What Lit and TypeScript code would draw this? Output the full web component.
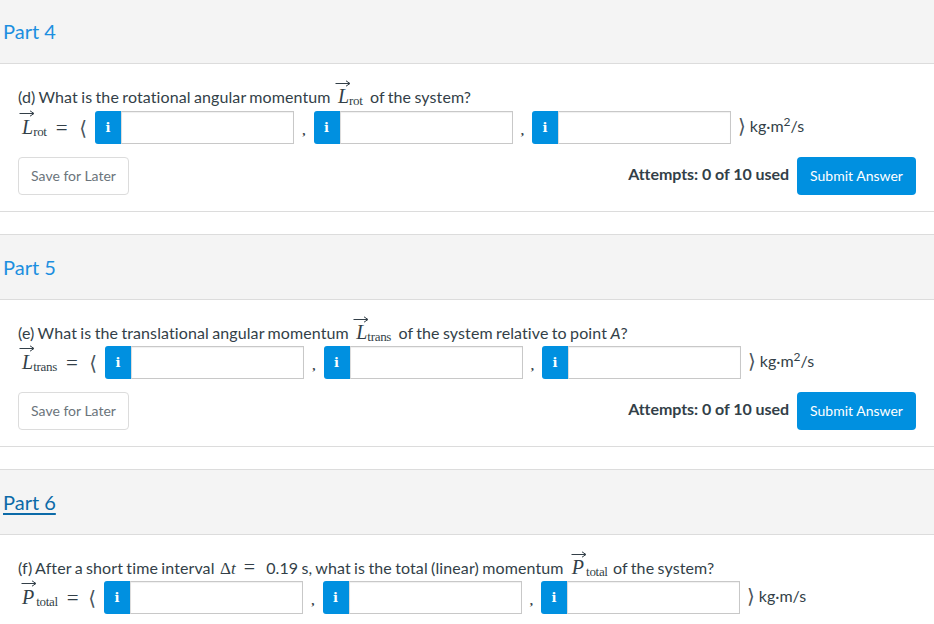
import { LitElement, html, css } from "lit";
import { customElement } from "lit/decorators.js";

const vec = (letter: string, sub: string, cls = "") => html`<span class="mi ${cls}"
  ><span class="vec"
    ><svg class="arrow" viewBox="0 0 16 7" width="16" height="7"
      ><path d="M0.5 3.5H14.5M11 0.8L15 3.5L11 6.2" fill="none" stroke="#333f48" stroke-width="1"/></svg
    ><i>${letter}</i></span
  ><span class="sub">${sub}</span></span
>`;

const field = () => html`<span class="group"
  ><span class="addon"><span class="info">i</span></span><span class="box"></span></span>`;

interface Part {
  name: string;
  cls: string;
  question: unknown;
  lhs: unknown;
  unit: unknown;
  actions: boolean;
}

const parts: Part[] = [
  {
    name: "Part 4",
    cls: "p4",
    question: html`(d) What is the rotational angular momentum ${vec("L", "rot", "inl")} of the system?`,
    lhs: vec("L", "rot"),
    unit: html`kg·m<sup>2</sup>/s`,
    actions: true,
  },
  {
    name: "Part 5",
    cls: "p5",
    question: html`(e) What is the translational angular momentum ${vec("L", "trans", "inl")} of the system relative to point <em>A</em>?`,
    lhs: vec("L", "trans"),
    unit: html`kg·m<sup>2</sup>/s`,
    actions: true,
  },
  {
    name: "Part 6",
    cls: "p6",
    question: html`(f) After a short time interval <span class="serif">Δ<i>t</i></span><span class="eq q">=</span>0.19 s, what is the total (linear) momentum ${vec("P", "total", "inl wide")} of the system?`,
    lhs: vec("P", "total", "wide"),
    unit: html`kg·m/s`,
    actions: false,
  },
];

@customElement("app-root")
export class AppRoot extends LitElement {
  static styles = css`
    :host {
      display: block;
      height: 624px;
      overflow: hidden;
      background: #fff;
      font-family: Lato, "Liberation Sans", sans-serif;
      font-size: 16px;
      color: #333f48;
    }
    .part {
      margin-top: 22px;
    }
    .part:first-child {
      margin-top: -1px;
    }
    .head {
      box-sizing: border-box;
      background: #f4f4f4;
      border-top: 1px solid #dcdcdc;
      border-bottom: 1px solid #dcdcdc;
      display: flex;
      align-items: center;
      padding-left: 3px;
      font-size: 20px;
      color: #1c8fe0;
    }
    .p4 .head {
      height: 65px;
      padding-bottom: 2px;
    }
    .p5 .head,
    .p6 .head {
      height: 66px;
      padding-bottom: 1px;
    }
    .p6 .head {
      color: #0b6aa8;
    }
    .p6 .head span {
      text-decoration: underline;
      text-underline-offset: 3px;
    }
    .body {
      padding: 22px 18px 16px;
      border-bottom: 1px solid #dcdcdc;
    }
    .q-line {
      height: 25px;
      line-height: 20px;
      white-space: nowrap;
      word-spacing: -0.85px;
      letter-spacing: 0.1px;
    }
    .p5 .q-line,
    .p6 .q-line {
      height: 24px;
    }
    .ans {
      display: flex;
      align-items: center;
      height: 33px;
      white-space: nowrap;
    }
    .lhs {
      display: flex;
      align-items: center;
      padding-left: 4px;
      box-sizing: border-box;
      flex: none;
    }
    .p4 .lhs {
      width: 77px;
    }
    .p5 .lhs {
      width: 87px;
    }
    .p6 .lhs {
      width: 86px;
    }
    .mi {
      display: inline-flex;
      align-items: baseline;
      font-family: "Liberation Serif", serif;
      font-size: 20px;
      word-spacing: 0;
      letter-spacing: 0;
    }
    .mi.inl {
      margin: 0 4px 0 4px;
    }
    .mi.inl.wide {
      margin: 0 2px 0 5px;
    }
    .vec {
      position: relative;
      display: inline-block;
    }
    .vec i {
      font-style: italic;
    }
    .arrow {
      position: absolute;
      left: -3px;
      top: -6px;
    }
    .wide .vec {
      margin-right: 2px;
    }
    .wide .arrow {
      left: -1px;
    }
    .sub {
      font-size: 13px;
      position: relative;
      top: 2px;
      letter-spacing: -0.3px;
    }
    .serif {
      font-family: "Liberation Serif", serif;
      margin-left: 2px;
      font-size: 17px;
    }
    .eq {
      font-family: "Liberation Serif", serif;
      font-size: 21px;
      margin: 0 0 0 9px;
      line-height: 20px;
    }
    .eq.q {
      margin: 0 11px 0 8px;
      font-size: 20px;
    }
    .angle {
      font-family: "DejaVu Sans", sans-serif;
      font-size: 20px;
      line-height: 20px;
      color: #4a545c;
      margin-left: auto;
      margin-right: 8px;
    }
    .group {
      display: flex;
      width: 199px;
      height: 33px;
      flex: none;
      box-sizing: border-box;
    }
    .addon {
      width: 26px;
      flex: none;
      background: #0090e0;
      border-radius: 3px 0 0 3px;
      display: flex;
      align-items: center;
      justify-content: center;
    }
    .info {
      font-family: "DejaVu Serif", serif;
      font-weight: 700;
      font-size: 13px;
      color: #fff;
    }
    .box {
      flex: 1;
      border: 1px solid #c8c8c8;
      border-left: 1px solid #dcdcdc;
      box-shadow: inset 0 1px 1px #f0f0f0;
    }
    .comma {
      width: 19.5px;
      flex: none;
      text-align: center;
      font-family: "Liberation Serif", serif;
      font-size: 13px;
      font-weight: 700;
      position: relative;
      top: 3px;
    }
    .unit {
      margin-left: 7px;
      display: flex;
      align-items: center;
      gap: 4px;
      font-size: 16px;
      position: relative;
      top: -2px;
    }
    .unit b {
      font-family: "DejaVu Sans", sans-serif;
      font-weight: 400;
      font-size: 20px;
      line-height: 20px;
      color: #4a545c;
    }
    .unit span {
      display: inline-block;
    }
    sup {
      font-size: 12px;
      line-height: 0;
    }
    .actions {
      display: flex;
      align-items: flex-start;
      margin-top: 13px;
      height: 38px;
    }
    .save {
      width: 111px;
      height: 38px;
      box-sizing: border-box;
      border: 1px solid #dcdcdc;
      border-radius: 4px;
      display: flex;
      align-items: center;
      justify-content: center;
      padding-bottom: 2px;
      font-size: 14px;
      color: #6b747b;
      background: #fff;
    }
    .attempts {
      margin-left: auto;
      height: 34px;
      line-height: 34px;
      font-weight: 700;
      font-size: 16px;
      letter-spacing: -0.05px;
    }
    .submit {
      margin-left: 8px;
      width: 119px;
      height: 38px;
      box-sizing: border-box;
      padding-bottom: 2px;
      border-radius: 4px;
      background: #0090e0;
      color: #fff;
      font-size: 14px;
      display: flex;
      align-items: center;
      justify-content: center;
    }
  `;

  render() {
    return parts.map(
      (p) => html`<section class="part ${p.cls}">
        <div class="head"><span>${p.name}</span></div>
        <div class="body">
          <div class="q-line">${p.question}</div>
          <div class="ans">
            <span class="lhs">${p.lhs}<span class="eq">=</span><span class="angle">⟨</span></span>
            ${field()}<span class="comma">,</span>${field()}<span class="comma">,</span>${field()}
            <span class="unit"><b>⟩</b><span>${p.unit}</span></span>
          </div>
          ${p.actions
            ? html`<div class="actions">
                <div class="save">Save for Later</div>
                <div class="attempts">Attempts: 0 of 10 used</div>
                <div class="submit">Submit Answer</div>
              </div>`
            : ""}
        </div>
      </section>`
    );
  }
}
